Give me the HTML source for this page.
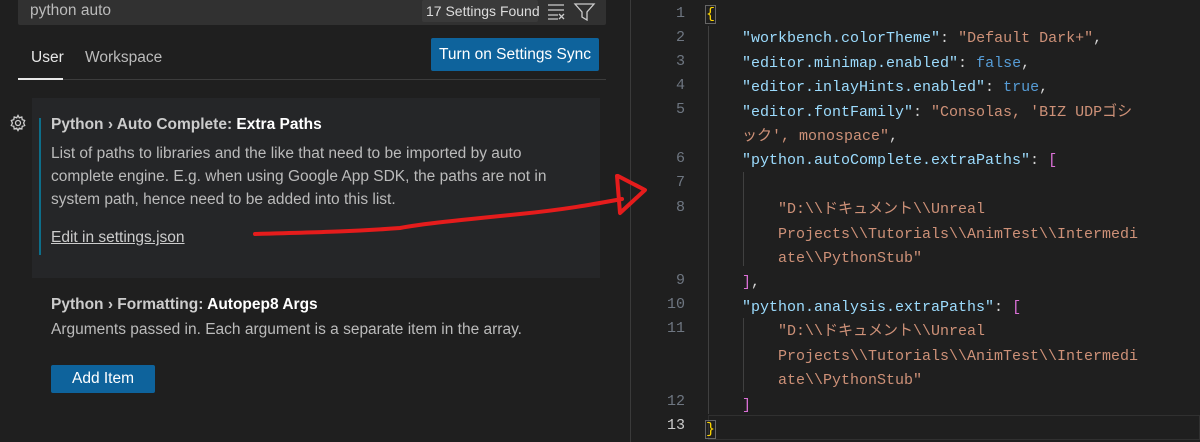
<!DOCTYPE html>
<html><head><meta charset="utf-8"><style>
*{margin:0;padding:0;box-sizing:border-box}
body{width:1200px;height:442px;background:#1f1f1f;overflow:hidden;position:relative;font-family:"Segoe UI","Liberation Sans","Noto Sans CJK JP",sans-serif;color:#ccc}
.a{position:absolute;white-space:nowrap}
.code{font-family:"Liberation Mono","Noto Sans CJK JP",monospace;font-size:15px}
.ln{position:absolute;width:40px;text-align:right;left:645px;color:#6e7681;font-family:"Liberation Mono",monospace;font-size:15px}
.k{color:#9cdcfe}.s{color:#ce9178}.b{color:#569cd6}.p{color:#d4d4d4}.y{color:#ffd700}.m{color:#da70d6}
</style></head><body>
<div class="a" style="left:18px;top:0;width:588px;height:25px;background:#313131;border-radius:0 0 2px 2px"></div>
<div class="a" style="left:30px;top:0;font-size:15.5px;color:#bbb;line-height:22px">python auto</div>
<div class="a" style="left:422px;top:0;width:116px;height:22px;background:#3a3a3a;border-radius:2px;font-size:14px;line-height:22px;padding-left:4px;color:#ddd">17 Settings Found</div>
<svg class="a" style="left:546px;top:1px" width="52" height="20"><g stroke="#ccc" stroke-width="1.3" fill="none"><path d="M2 4h16M2 9h16M2 14h10M2 18h10M13 13l5 5M18 13l-5 5"/><path d="M29 3h19l-7 8v8l-5-3v-5z"/></g></svg>
<div class="a" style="left:431px;top:38px;width:168px;height:33px;background:#0e639c;border-radius:2px;color:#fff;font-size:15.5px;line-height:33px;text-align:center">Turn on Settings Sync</div>
<div class="a" style="left:31px;top:49px;font-size:15.5px;color:#e7e7e7">User</div>
<div class="a" style="left:85px;top:49px;font-size:15.5px;color:#bbb">Workspace</div>
<div class="a" style="left:18px;top:79px;width:588px;height:1px;background:#3c3c3c"></div>
<div class="a" style="left:18px;top:78px;width:45px;height:2px;background:#e7e7e7"></div>
<div class="a" style="left:32px;top:98px;width:568px;height:180px;background:#252628"></div>
<div class="a" style="left:39px;top:118px;width:2px;height:137px;background:#0d6e8a"></div>
<svg class="a" style="left:9px;top:114px" width="18" height="18"><g fill="none" stroke="#ccc" stroke-width="1.3"><circle cx="9" cy="9" r="2.5"/><path d="M9 1.5l1.3 2.3 2.5-.8.4 2.6 2.5.9-1.1 2.5 1.1 2.5-2.5.9-.4 2.6-2.5-.8L9 16.5l-1.3-2.3-2.5.8-.4-2.6-2.5-.9 1.1-2.5-1.1-2.5 2.5-.9.4-2.6 2.5.8z"/></g></svg>
<div class="a" style="left:51px;top:116px;font-size:15.5px;color:#ccc;font-weight:bold">Python › Auto Complete: <span style="color:#fff">Extra Paths</span></div>
<div class="a" style="left:51px;top:142px;font-size:15.5px;line-height:23px;color:#bbb">List of paths to libraries and the like that need to be imported by auto<br>complete engine. E.g. when using Google App SDK, the paths are not in<br>system path, hence need to be added into this list.</div>
<div class="a" style="left:51px;top:229px;font-size:15.5px;color:#ccc;text-decoration:underline">Edit in settings.json</div>
<div class="a" style="left:51px;top:296px;font-size:15.5px;color:#ccc;font-weight:bold">Python › Formatting: <span style="color:#fff">Autopep8 Args</span></div>
<div class="a" style="left:51px;top:321px;font-size:15.5px;color:#bbb">Arguments passed in. Each argument is a separate item in the array.</div>
<div class="a" style="left:51px;top:365px;width:104px;height:28px;background:#0e639c;border-radius:2px;color:#fff;font-size:15.5px;line-height:28px;text-align:center">Add Item</div>
<div class="a" style="left:630px;top:0;width:1px;height:442px;background:#3a3a3a"></div>
<div class="a" style="left:708px;top:415px;width:492px;height:25px;border:1px solid #303030"></div>
<div class="a" style="left:708px;top:26px;width:1px;height:388px;background:#404040"></div>
<div class="a" style="left:743px;top:172px;width:1px;height:94px;background:#404040"></div>
<div class="a" style="left:743px;top:318px;width:1px;height:74px;background:#404040"></div>
<div class="ln" style="top:5px">1</div><div class="ln" style="top:29px">2</div><div class="ln" style="top:53px">3</div><div class="ln" style="top:77px">4</div><div class="ln" style="top:101px">5</div><div class="ln" style="top:150px">6</div><div class="ln" style="top:174px">7</div><div class="ln" style="top:199px">8</div><div class="ln" style="top:272px">9</div><div class="ln" style="top:296px">10</div><div class="ln" style="top:320px">11</div><div class="ln" style="top:393px">12</div><div class="ln" style="top:417px;color:#ccc">13</div>
<div class="a code" style="left:706px;top:0;line-height:24.4px;padding-top:3px">
<div><span class="y" style="outline:1px solid #666">{</span></div>
<div style="padding-left:36px"><span class="k">"workbench.colorTheme"</span><span class="p">: </span><span class="s">"Default Dark+"</span><span class="p">,</span></div>
<div style="padding-left:36px"><span class="k">"editor.minimap.enabled"</span><span class="p">: </span><span class="b">false</span><span class="p">,</span></div>
<div style="padding-left:36px"><span class="k">"editor.inlayHints.enabled"</span><span class="p">: </span><span class="b">true</span><span class="p">,</span></div>
<div style="padding-left:36px"><span class="k">"editor.fontFamily"</span><span class="p">: </span><span class="s">"Consolas, 'BIZ UDPゴシ</span></div>
<div style="padding-left:36px"><span class="s">ック', monospace"</span><span class="p">,</span></div>
<div style="padding-left:36px"><span class="k">"python.autoComplete.extraPaths"</span><span class="p">: </span><span class="m">[</span></div>
<div>&nbsp;</div>
<div style="padding-left:72px"><span class="s">"D:\\ドキュメント\\Unreal</span></div>
<div style="padding-left:72px"><span class="s">Projects\\Tutorials\\AnimTest\\Intermedi</span></div>
<div style="padding-left:72px"><span class="s">ate\\PythonStub"</span></div>
<div style="padding-left:36px"><span class="m">]</span><span class="p">,</span></div>
<div style="padding-left:36px"><span class="k">"python.analysis.extraPaths"</span><span class="p">: </span><span class="m">[</span></div>
<div style="padding-left:72px"><span class="s">"D:\\ドキュメント\\Unreal</span></div>
<div style="padding-left:72px"><span class="s">Projects\\Tutorials\\AnimTest\\Intermedi</span></div>
<div style="padding-left:72px"><span class="s">ate\\PythonStub"</span></div>
<div style="padding-left:36px"><span class="m">]</span></div>
<div><span class="y" style="outline:1px solid #666">}</span></div>
</div>
<svg class="a" style="left:0;top:0" width="1200" height="442"><path d="M255 234 C330 232 360 231 400 228 C420 224 460 220 520 214 C570 209 600 203 622 199 M618 176 L645 190 L620 213 L617 176" fill="none" stroke="#e51c1c" stroke-width="4" stroke-linecap="round" stroke-linejoin="round"/></svg>
</body></html>
